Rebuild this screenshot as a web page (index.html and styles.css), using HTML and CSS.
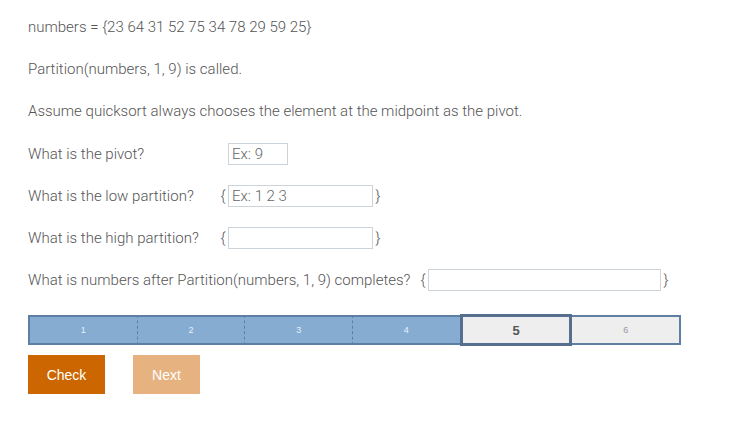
FILE: index.html
```html
<!DOCTYPE html>
<html>
<head>
<meta charset="utf-8">
<link rel="stylesheet" href="styles.css">
</head>
<body>
<div class="page">
  <p class="line">numbers = {23 64 31 52 75 34 78 29 59 25}</p>
  <p class="line">Partition(numbers, 1, 9) is called.</p>
  <p class="line">Assume quicksort always chooses the element at the midpoint as the pivot.</p>
  <div class="q">
    <span class="label w-pivot">What is the pivot?</span>
    <input class="inp small" placeholder="Ex: 9">
  </div>
  <div class="q">
    <span class="label w-low">What is the low partition?</span>
    <span class="brace">{</span><input class="inp mid" placeholder="Ex: 1 2 3"><span class="brace">}</span>
  </div>
  <div class="q">
    <span class="label w-low">What is the high partition?</span>
    <span class="brace">{</span><input class="inp mid"><span class="brace">}</span>
  </div>
  <div class="q">
    <span class="label w-last">What is numbers after Partition(numbers, 1, 9) completes?</span>
    <span class="brace">{</span><input class="inp big"><span class="brace">}</span>
  </div>
  <div class="progress">
    <div class="seg done">1</div>
    <div class="seg done">2</div>
    <div class="seg done">3</div>
    <div class="seg done">4</div>
    <div class="seg current">5</div>
    <div class="seg todo">6</div>
  </div>
  <div class="buttons">
    <button class="btn check">Check</button>
    <button class="btn next">Next</button>
  </div>
</div>
</body>
</html>
```
FILE: styles.css
```css
html, body { margin: 0; padding: 0; background: #fff; }
body {
  font-family: Roboto, "Liberation Sans", sans-serif;
  font-weight: 300;
  font-size: 15px;
  color: #555;
}
.page { padding: 17px 0 0 28px; }
.line { margin: 0 0 22px 0; height: 20px; line-height: 20px; }
.q { display: flex; align-items: center; height: 22px; margin-bottom: 20px; }
.label { white-space: nowrap; }
.w-pivot { width: 200px; }
.w-low { width: 190px; }
.w-last { width: 390px; }
.brace { display: inline-block; width: 10px; text-align: center; font-size: 15px; }
.inp {
  box-sizing: border-box;
  height: 22px;
  border: 1px solid #ccd3d9;
  padding: 0 3px;
  font-family: Roboto, "Liberation Sans", sans-serif;
  font-weight: 300;
  font-size: 15px;
  color: #555;
  outline: none;
  margin: 0;
}
.inp::placeholder { color: #666; }
.small { width: 60px; }
.mid { width: 145px; }
.big { width: 233px; }
.progress {
  display: flex;
  width: 653px;
  height: 30px;
  margin-top: 24px;
  box-sizing: border-box;
}
.seg {
  flex: 1;
  display: flex;
  align-items: center;
  justify-content: center;
  box-sizing: border-box;
  font-family: "Liberation Sans", Arial, sans-serif;
  font-size: 9px;
  font-weight: 400;
}
.done {
  background: #86acd2;
  color: #e9f0f7;
  border-top: 2px solid #5c7fa3;
  border-bottom: 2px solid #5c7fa3;
  border-left: 1px dashed #5c7fa3;
}
.done:first-child { border-left: 2px solid #5c7fa3; }
.current {
  background: #eeeeee;
  border: 3px solid #566f8e;
  font-size: 13px;
  font-weight: 700;
  color: #555;
  height: 32px;
  margin-top: -1px;
}
.todo {
  background: #eeeeee;
  color: #999;
  border-top: 2px solid #5c7fa3;
  border-bottom: 2px solid #5c7fa3;
  border-right: 2px solid #5c7fa3;
}
.buttons { display: flex; gap: 28px; margin-top: 10px; }
.btn {
  border: none;
  height: 39px;
  font-family: "Liberation Sans", Arial, sans-serif;
  font-size: 14px;
  color: #fff;
  padding: 0;
  margin: 0;
}
.check { width: 77px; background: #cc6600; }
.next { width: 67px; background: #e6b280; }
```
